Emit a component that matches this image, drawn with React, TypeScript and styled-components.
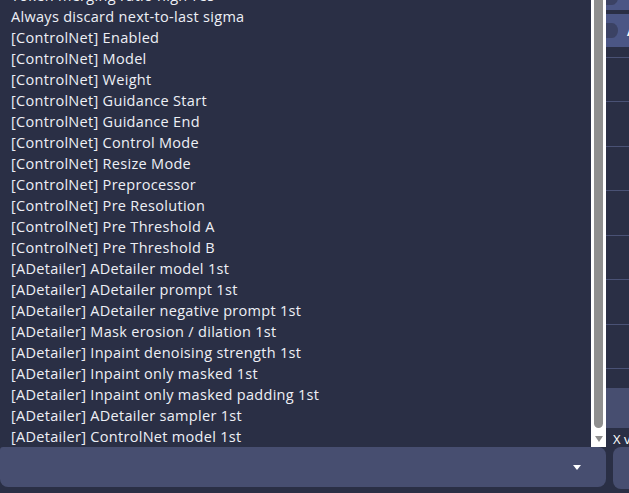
import * as React from "react"
import styled, { createGlobalStyle } from "styled-components"

const GlobalStyle = createGlobalStyle`
  html, body {
    margin: 0;
    padding: 0;
    background: #2a2f45;
    overflow: hidden;
  }
  body {
    font-family: "Open Sans", "Noto Sans", sans-serif;
  }
`

const items = [
  "Token merging ratio high-res",
  "Always discard next-to-last sigma",
  "[ControlNet] Enabled",
  "[ControlNet] Model",
  "[ControlNet] Weight",
  "[ControlNet] Guidance Start",
  "[ControlNet] Guidance End",
  "[ControlNet] Control Mode",
  "[ControlNet] Resize Mode",
  "[ControlNet] Preprocessor",
  "[ControlNet] Pre Resolution",
  "[ControlNet] Pre Threshold A",
  "[ControlNet] Pre Threshold B",
  "[ADetailer] ADetailer model 1st",
  "[ADetailer] ADetailer prompt 1st",
  "[ADetailer] ADetailer negative prompt 1st",
  "[ADetailer] Mask erosion / dilation 1st",
  "[ADetailer] Inpaint denoising strength 1st",
  "[ADetailer] Inpaint only masked 1st",
  "[ADetailer] Inpaint only masked padding 1st",
  "[ADetailer] ADetailer sampler 1st",
  "[ADetailer] ControlNet model 1st",
]

const Page = styled.div`
  display: flex;
  width: 629px;
  height: 493px;
  overflow: hidden;
  background: #2a2f45;
`

const LeftColumn = styled.div`
  display: flex;
  flex-direction: column;
  width: 606px;
  flex-shrink: 0;
`

const ListBox = styled.div`
  display: flex;
  height: 447px;
  overflow: hidden;
`

const Options = styled.ul`
  flex: 1;
  margin: 0;
  padding: 0 0 0 11px;
  list-style: none;
  background: #2a2f45;
  overflow: hidden;
`

const Option = styled.li`
  height: 21px;
  line-height: 21px;
  font-size: 14.5px;
  letter-spacing: 0.3px;
  color: #eef0f6;
  white-space: nowrap;
  &:first-child {
    margin-top: -15px;
  }
`

const ScrollTrack = styled.div`
  width: 15px;
  background: #ffffff;
  display: flex;
  flex-direction: column;
  align-items: center;
`

const ScrollThumb = styled.div`
  width: 9px;
  height: 428px;
  background: #8f8f8f;
  border-radius: 0 0 5px 5px;
`

const ScrollArrow = styled.div`
  margin-top: 8px;
  width: 0;
  height: 0;
  border-left: 4px solid transparent;
  border-right: 4px solid transparent;
  border-top: 6px solid #8f8f8f;
`

const SelectBar = styled.div`
  height: 40px;
  background: #474e70;
  border-radius: 3px 8px 8px 8px;
  display: flex;
  align-items: center;
  justify-content: flex-end;
  padding-right: 25px;
`

const Caret = styled.div`
  width: 0;
  height: 0;
  border-left: 4px solid transparent;
  border-right: 4px solid transparent;
  border-top: 5px solid #ffffff;
`

const RightColumn = styled.div`
  flex: 1;
  display: flex;
  flex-direction: column;
  overflow: hidden;
`

const RadioItem = styled.div<{ $height: number }>`
  height: ${(p) => p.$height}px;
  background: #4b5685;
  display: flex;
  align-items: center;
  gap: 9px;
  overflow: hidden;
  color: #ffffff;
  font-size: 14px;
  font-weight: 600;
  & + & {
    margin-top: 4px;
  }
`

const RadioDot = styled.div<{ $top?: boolean }>`
  width: 12px;
  height: 15px;
  border-radius: 0 50% 50% 0;
  background: #3b4264;
  flex-shrink: 0;
  align-self: ${(p) => (p.$top ? "flex-start" : "center")};
  margin-top: ${(p) => (p.$top ? "-10px" : "0")};
`

const RadioGroup = styled.div`
  display: flex;
  flex-direction: column;
`

const TableRows = styled.div`
  margin-top: 10px;
  display: flex;
  flex-direction: column;
`

const TableRow = styled.div<{ $height: number }>`
  height: ${(p) => p.$height}px;
  border-top: 1px solid #4a5275;
  box-sizing: border-box;
  flex-shrink: 0;
`

const Block = styled.div`
  height: 40px;
  background: #474e70;
`

const Label = styled.div`
  margin: 3px 0 0 7px;
  height: 16px;
  line-height: 16px;
  font-size: 13px;
  color: #ffffff;
  white-space: nowrap;
`

const SideSelect = styled.div`
  margin: 0 0 0 7px;
  height: 42px;
  background: #474e70;
  border-radius: 8px 0 0 8px;
`

export default function App() {
  return (
    <>
      <GlobalStyle />
      <Page>
        <LeftColumn>
          <ListBox>
            <Options>
              {items.map((t) => (
                <Option key={t}>{t}</Option>
              ))}
            </Options>
            <ScrollTrack>
              <ScrollThumb />
              <ScrollArrow />
            </ScrollTrack>
          </ListBox>
          <SelectBar>
            <Caret />
          </SelectBar>
        </LeftColumn>
        <RightColumn>
          <RadioGroup>
            <RadioItem $height={10}>
              <RadioDot $top />
            </RadioItem>
            <RadioItem $height={33}>
              <RadioDot />
              <span>A</span>
            </RadioItem>
          </RadioGroup>
          <TableRows>
            {Array.from({ length: 7 }).map((_, i) => (
              <TableRow key={i} $height={44.43} />
            ))}
            <TableRow $height={20} />
          </TableRows>
          <Block />
          <Label>X v</Label>
          <SideSelect />
        </RightColumn>
      </Page>
    </>
  )
}
